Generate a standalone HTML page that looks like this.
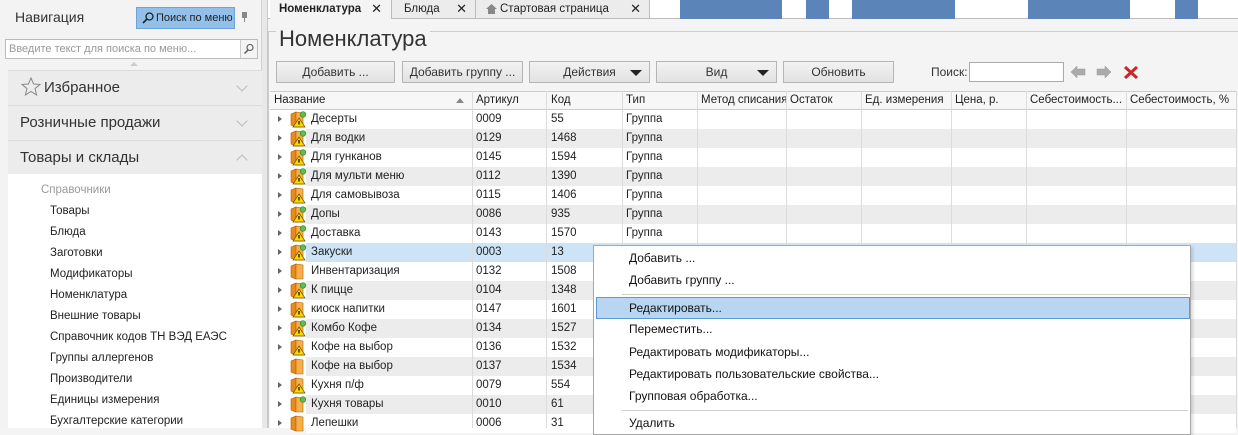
<!DOCTYPE html>
<html><head><meta charset="utf-8"><style>
*{box-sizing:border-box;margin:0;padding:0}
body{width:1238px;height:428px;overflow:hidden;background:#f4f4f4;font-family:"Liberation Sans","DejaVu Sans",sans-serif;font-size:12px;color:#222;position:relative}
.a{position:absolute}
.side{left:0;top:0;width:262px;height:428px;background:#f3f3f3;border-right:1px solid #d0d0d0}
.sep{left:262px;top:0;width:6px;height:428px;background:#e8e8e8;border-right:1px solid #c8c8c8}
.sec{left:8px;width:254px;height:35px;background:#ececec;border-top:1px solid #dcdcdc;font-size:15px;line-height:34px;color:#333}
.chev{position:absolute;right:16px;top:11px;width:8px;height:8px;border-right:1.5px solid #bbb;border-bottom:1.5px solid #bbb;transform:rotate(45deg)}
.sub{left:50px;font-size:11.5px;color:#222}
.btn{top:61px;height:22px;background:linear-gradient(#f2f2f2,#e2e2e2);border:1px solid #b5b5b5;text-align:center;line-height:20px;font-size:12px;color:#333}
.dd{position:absolute;right:7px;top:8px;border-left:6px solid transparent;border-right:6px solid transparent;border-top:6px solid #222}
.row{left:270px;width:966px;height:19px;line-height:19px;font-size:11.5px}
.row span{position:absolute;top:0}
.hd{left:270px;top:91px;width:966px;height:19px;background:#f7f7f7;border-bottom:1px solid #ccc;border-top:1px solid #ccc;line-height:17px;font-size:11.5px}
.vl{top:91px;width:1px;height:337px;background:#dcdcdc}
.tab{top:0;height:19px;line-height:18px;border-right:1px solid #bbb;border-bottom:1px solid #bbb;background:#ececec;font-size:11.5px}
.x{position:absolute;right:8px;font-weight:bold;font-size:13px}
.blue{top:0;height:19px;background:#5b84b8}
.menu{left:593px;top:245px;width:598px;height:190px;background:#fff;border:1px solid #a8a8a8;box-shadow:2px 2px 3px rgba(0,0,0,.15)}
.mi{position:absolute;left:35px;font-size:12px;color:#111}
.ms{position:absolute;left:28px;right:2px;height:1px;background:#d0d0d0}
</style></head><body>
<div class="a side"></div>
<div class="a sep"></div>
<div class="a" style="left:15px;top:9px;font-size:14px;color:#333">Навигация</div>
<div class="a" style="left:136px;top:7px;width:99px;height:22px;background:#92c0ea;border:1px solid #6fa3d6;font-size:11px;line-height:20px;padding-left:19px;color:#222;white-space:nowrap;overflow:hidden">Поиск по меню</div>
<svg class="a" style="left:141px;top:11px" width="14" height="14"><circle cx="8.5" cy="5.5" r="3.5" fill="none" stroke="#222" stroke-width="1.3"/><line x1="6" y1="8" x2="2" y2="12" stroke="#222" stroke-width="1.6"/></svg>
<div class="a" style="left:242px;top:12px;width:5px;height:6px;background:#888"></div><div class="a" style="left:244px;top:18px;width:1px;height:4px;background:#888"></div>
<div class="a" style="left:5px;top:39px;width:253px;height:20px;background:#fff;border:1px solid #bbb;font-size:11px;color:#999;line-height:18px;padding-left:3px">Введите текст для поиска по меню...</div>
<div class="a" style="left:240px;top:40px;width:17px;height:18px;border-left:1px solid #ccc;background:#f4f4f4"></div>
<svg class="a" style="left:243px;top:43px" width="12" height="12"><circle cx="7" cy="4.5" r="3" fill="none" stroke="#555" stroke-width="1.1"/><line x1="5" y1="7" x2="1.5" y2="10.5" stroke="#555" stroke-width="1.4"/></svg>
<div class="a" style="left:130px;top:62px;border-left:4px solid transparent;border-right:4px solid transparent;border-bottom:4px solid #ccc"></div>
<div class="a sec" style="top:70px;padding-left:36px">Избранное<div class="chev"></div></div>
<svg class="a" style="left:21px;top:77px" width="20" height="19"><polygon points="10,1 12.6,7 19,7.4 14,11.6 15.6,18 10,14.5 4.4,18 6,11.6 1,7.4 7.4,7" fill="none" stroke="#888" stroke-width="1"/></svg>
<div class="a sec" style="top:105px;padding-left:12px">Розничные продажи<div class="chev"></div></div>
<div class="a sec" style="top:140px;padding-left:12px;height:34px">Товары и склады<div class="chev" style="transform:rotate(-135deg);top:15px"></div></div>
<div class="a" style="left:8px;top:174px;width:254px;height:254px;background:#fff"></div>
<div class="a" style="left:41px;top:184px;font-size:11.5px;color:#999">Справочники</div>
<div class="a sub" style="top:205px">Товары</div>
<div class="a sub" style="top:226px">Блюда</div>
<div class="a sub" style="top:247px">Заготовки</div>
<div class="a sub" style="top:268px">Модификаторы</div>
<div class="a sub" style="top:289px">Номенклатура</div>
<div class="a sub" style="top:310px">Внешние товары</div>
<div class="a sub" style="top:331px">Справочник кодов ТН ВЭД ЕАЭС</div>
<div class="a sub" style="top:352px">Группы аллергенов</div>
<div class="a sub" style="top:373px">Производители</div>
<div class="a sub" style="top:394px">Единицы измерения</div>
<div class="a sub" style="top:415px">Бухгалтерские категории</div>

<div class="a" style="left:268px;top:0;width:970px;height:19px;background:#fff;border-bottom:1px solid #bbb"></div>
<div class="a tab" style="left:270px;width:122px;background:#f4f4f4;border-bottom:none;font-weight:bold;padding-left:9px">Номенклатура<span class="x" style="right:9px">✕</span></div>
<div class="a tab" style="left:392px;width:84px;padding-left:12px">Блюда<span class="x">✕</span></div>
<div class="a tab" style="left:476px;width:174px;padding-left:24px">Стартовая страница<span class="x">✕</span></div>
<svg class="a" style="left:486px;top:4px" width="11" height="11"><polygon points="5.5,0 11,5 9,5 9,10 2,10 2,5 0,5" fill="#888"/></svg>
<div class="a blue" style="left:680px;width:102px"></div>
<div class="a blue" style="left:806px;width:23px"></div>
<div class="a blue" style="left:852px;width:103px"></div>
<div class="a blue" style="left:1028px;width:102px"></div>
<div class="a blue" style="left:1175px;width:23px"></div>

<div class="a" style="left:268px;top:31px;width:970px;height:1px;background:#ccc"></div>
<div class="a" style="left:268px;top:31px;width:1px;height:397px;background:#ccc"></div>
<div class="a" style="left:276px;top:26px;padding:0 3px;background:#f4f4f4;font-size:22px;color:#333">Номенклатура</div>

<div class="a btn" style="left:276px;width:119px">Добавить ...</div>
<div class="a btn" style="left:402px;width:121px">Добавить группу ...</div>
<div class="a btn" style="left:529px;width:121px">Действия<span class="dd"></span></div>
<div class="a btn" style="left:656px;width:121px">Вид<span class="dd"></span></div>
<div class="a btn" style="left:783px;width:111px">Обновить</div>
<div class="a" style="left:931px;top:65px;font-size:12px;color:#333">Поиск:</div>
<div class="a" style="left:969px;top:62px;width:95px;height:20px;background:#fff;border:1px solid #aaa"></div>
<svg class="a" style="left:1070px;top:65px" width="80" height="14"><polygon points="1,7 7,1 7,4 15,4 15,10 7,10 7,13" fill="#aaa" stroke="#999" stroke-width=".5"/><polygon points="41,7 35,1 35,4 27,4 27,10 35,10 35,13" fill="#aaa" stroke="#999" stroke-width=".5"/><path d="M55,2 L67,13 M67,2 L55,13" stroke="#c8282a" stroke-width="3"/></svg>

<div class="a" style="left:270px;top:91px;width:966px;height:337px;background:#fff"></div>
<div class="a hd">
<span class="a" style="left:4px">Название</span><span class="a" style="left:186px;top:6px;border-left:4px solid transparent;border-right:4px solid transparent;border-bottom:5px solid #888"></span>
<span class="a" style="left:206px">Артикул</span><span class="a" style="left:281px">Код</span><span class="a" style="left:356px">Тип</span><span class="a" style="left:431px">Метод списания</span><span class="a" style="left:520px">Остаток</span><span class="a" style="left:595px">Ед. измерения</span><span class="a" style="left:685px">Цена, р.</span><span class="a" style="left:760px">Себестоимость...</span><span class="a" style="left:860px">Себестоимость, %</span>
</div>
<div id="rows"></div>
<div class="a vl" style="left:472px"></div><div class="a vl" style="left:546px"></div><div class="a vl" style="left:622px"></div><div class="a vl" style="left:697px"></div><div class="a vl" style="left:786px"></div><div class="a vl" style="left:861px"></div><div class="a vl" style="left:951px"></div><div class="a vl" style="left:1026px"></div><div class="a vl" style="left:1126px"></div><div class="a vl" style="left:1236px"></div>

<div class="a menu">
<div class="mi" style="top:5px">Добавить ...</div>
<div class="mi" style="top:27px">Добавить группу ...</div>
<div class="ms" style="top:48px"></div>
<div style="position:absolute;left:2px;top:51px;width:594px;height:22px;background:#b8d6f2;border:1px solid #5a9ad6"></div>
<div class="mi" style="top:55px">Редактировать...</div>
<div class="mi" style="top:76px">Переместить...</div>
<div class="mi" style="top:99px">Редактировать модификаторы...</div>
<div class="mi" style="top:121px">Редактировать пользовательские свойства...</div>
<div class="mi" style="top:143px">Групповая обработка...</div>
<div class="ms" style="top:164px"></div>
<div class="mi" style="top:170px">Удалить</div>
</div>

<script>
var d=[["Десерты","0009","55","wg"],["Для водки","0129","1468","wg"],["Для гунканов","0145","1594","wg"],["Для мульти меню","0112","1390","wg"],["Для самовывоза","0115","1406","w"],["Допы","0086","935","wg"],["Доставка","0143","1570","wg"],["Закуски","0003","13","wg"],["Инвентаризация","0132","1508",""],["К пицце","0104","1348","wg"],["киоск напитки","0147","1601","w"],["Комбо Кофе","0134","1527","wg"],["Кофе на выбор","0136","1532","w"],["Кофе на выбор","0137","1534","n"],["Кухня п/ф","0079","554","w"],["Кухня товары","0010","61","g"],["Лепешки","0006","31",""]];
var h="";
d.forEach(function(r,i){var t=110+19*i;var bg=i==7?"#cde4f7":(i%2?"#ececec":"#fff");
h+='<div class="a row" style="top:'+t+'px;"><div style="position:absolute;left:36px;top:0;right:0;height:19px;background:'+bg+'"></div>';
if(r[3]!="n")h+='<span style="left:8px;top:6px;border-top:3.5px solid transparent;border-bottom:3.5px solid transparent;border-left:4px solid #666"></span>';
h+='<svg style="position:absolute;left:20px;top:1px" width="17" height="17"><path d="M1,3 L6,1 L6,16 L1,14 Z" fill="#e88a1c" stroke="#b35f00" stroke-width=".6"/><path d="M6,1 L13,2 L13,16 L6,16 Z" fill="#f6b04a" stroke="#b35f00" stroke-width=".6"/>';
if(r[3].indexOf("w")>=0)h+='<polygon points="9,7 15,16 3,16" fill="#ffd700" stroke="#6b5000" stroke-width=".7"/><line x1="9" y1="10" x2="9" y2="13.5" stroke="#000" stroke-width="1.2"/>';
if(r[3].indexOf("g")>=0)h+='<circle cx="13" cy="3.5" r="2.8" fill="#5cc04a" stroke="#2f7f2a" stroke-width=".6"/>';
h+='</svg><span style="left:41px">'+r[0]+'</span><span style="left:206px">'+r[1]+'</span><span style="left:281px">'+r[2]+'</span><span style="left:356px">'+(i<8?"Группа":"")+'</span></div>';});
document.getElementById("rows").innerHTML=h;
</script>
</body></html>
